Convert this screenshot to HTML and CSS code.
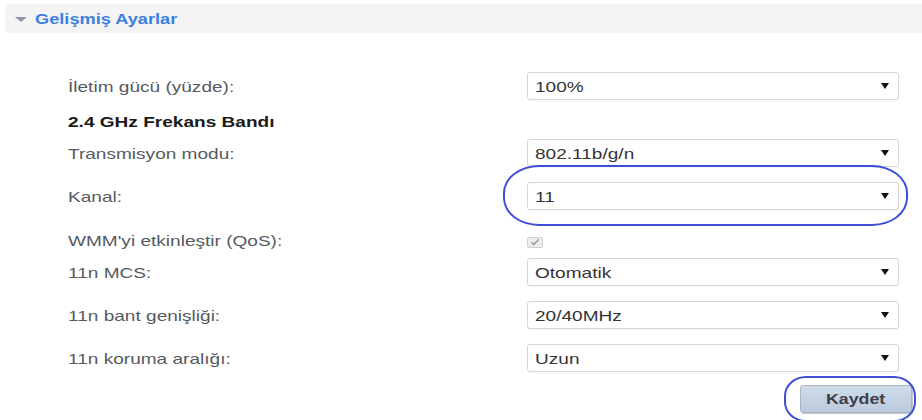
FILE: index.html
```html
<!DOCTYPE html>
<html lang="tr">
<head>
<meta charset="utf-8">
<link rel="stylesheet" href="styles.css">
</head>
<body>
<div class="page">
  <div class="section-head">
    <span class="caret"></span>
    <span class="section-title wide">Gelişmiş Ayarlar</span>
  </div>
  <div class="form">
    <div class="row r1">
      <div class="label"><span class="wide">İletim gücü (yüzde):</span></div>
      <div class="select"><span class="val wide">100%</span><span class="arrow"></span></div>
    </div>
    <div class="group-title"><span class="wide">2.4 GHz Frekans Bandı</span></div>
    <div class="row r2">
      <div class="label"><span class="wide">Transmisyon modu:</span></div>
      <div class="select"><span class="val wide">802.11b/g/n</span><span class="arrow"></span></div>
    </div>
    <div class="row r3">
      <div class="label"><span class="wide">Kanal:</span></div>
      <div class="select"><span class="val wide">11</span><span class="arrow"></span><span class="ring ring-kanal"></span></div>
    </div>
    <div class="row r4">
      <div class="label"><span class="wide">WMM'yi etkinleştir (QoS):</span></div>
      <div class="check-cell"><span class="check"><svg width="10" height="8" viewBox="0 0 10 8"><path d="M1.5 4.3 L4 6.4 L8.8 1.3" fill="none" stroke="#a0a0a0" stroke-width="1.6"/></svg></span></div>
    </div>
    <div class="row r5">
      <div class="label"><span class="wide">11n MCS:</span></div>
      <div class="select"><span class="val wide">Otomatik</span><span class="arrow"></span></div>
    </div>
    <div class="row r6">
      <div class="label"><span class="wide">11n bant genişliği:</span></div>
      <div class="select"><span class="val wide">20/40MHz</span><span class="arrow"></span></div>
    </div>
    <div class="row r7">
      <div class="label"><span class="wide">11n koruma aralığı:</span></div>
      <div class="select"><span class="val wide">Uzun</span><span class="arrow"></span></div>
    </div>
    <div class="actions">
      <button class="save"><span class="btn-text wide">Kaydet</span><span class="ring ring-save"></span></button>
    </div>
  </div>
</div>
</body>
</html>
```
FILE: styles.css
```css
html, body {
  margin: 0;
  padding: 0;
  background: #ffffff;
}
body {
  font-family: "Liberation Sans", Arial, sans-serif;
  width: 922px;
  height: 420px;
  overflow: hidden;
}
.wide {
  display: inline-block;
  transform: scaleX(1.27);
  transform-origin: left center;
  white-space: nowrap;
}
.page {
  padding-top: 4px;
}
.section-head {
  margin-left: 5px;
  height: 29px;
  background: #f4f4f4;
  border-radius: 4px 0 0 4px;
  display: flex;
  align-items: center;
  padding-left: 10px;
}
.caret {
  width: 0;
  height: 0;
  border-left: 6.5px solid transparent;
  border-right: 6.5px solid transparent;
  border-top: 5px solid #8a96a8;
  margin-right: 8px;
  margin-top: 2px;
}
.section-title {
  color: #3b7fe0;
  font-weight: bold;
  font-size: 14px;
  transform: scaleX(1.3);
}
.form {
  padding-left: 68px;
  padding-top: 39px;
  width: 831px;
}
.row {
  display: grid;
  grid-template-columns: 459px 372px;
  align-items: center;
}
.label {
  color: #555a60;
  font-size: 15px;
}
.select {
  position: relative;
  height: 28px;
  box-sizing: border-box;
  border: 1px solid #d6d6d6;
  border-radius: 3px;
  background: #fff;
  display: flex;
  align-items: center;
  justify-content: space-between;
  padding: 0 9px 0 7px;
  font-size: 15px;
  color: #333;
  box-shadow: 0 1px 1px rgba(0,0,0,0.04);
}
.arrow {
  width: 0;
  height: 0;
  border-left: 4px solid transparent;
  border-right: 4px solid transparent;
  border-top: 6px solid #111;
}
.group-title {
  font-weight: bold;
  font-size: 15px;
  color: #1a1a1a;
  margin-top: 13px;
  height: 18px;
  line-height: 18px;
}
.r2 { margin-top: 8px; }
.r3 { margin-top: 15px; }
.r4 { margin-top: 21px; height: 22px; }
.r5 { margin-top: 5px; }
.r6 { margin-top: 15px; }
.r7 { margin-top: 15px; }
.r4 .label { margin-top: -4px; }
.check-cell {
  display: flex;
  align-items: center;
}
.check {
  width: 14px;
  height: 9px;
  border: 1px solid #d0d0d0;
  border-radius: 2px;
  background: #ececec;
  display: flex;
  align-items: center;
  justify-content: center;
}
.ring {
  position: absolute;
  border: 2px solid #3d4fd4;
  pointer-events: none;
}
.ring-kanal {
  left: -25px;
  right: -10px;
  top: -18px;
  bottom: -17px;
  border-radius: 36px / 28px;
}
.actions {
  display: flex;
  justify-content: flex-end;
  margin-top: 13px;
}
.save {
  position: relative;
  width: 112px;
  height: 28px;
  margin-right: -13px;
  border: 1px solid #aab6c6;
  border-radius: 3px;
  background: linear-gradient(#cfdbe9, #bccbdd);
  color: #3e3e48;
  font-family: "Liberation Sans", Arial, sans-serif;
  font-weight: bold;
  font-size: 14px;
  padding: 0;
  box-shadow: 1px 1px 1px rgba(0,0,0,0.25);
  text-align: left;
}
.btn-text {
  margin-left: 25px;
}
.ring-save {
  left: -17px;
  right: -5px;
  top: -10px;
  bottom: -10px;
  border-radius: 22px / 20px;
}
```
